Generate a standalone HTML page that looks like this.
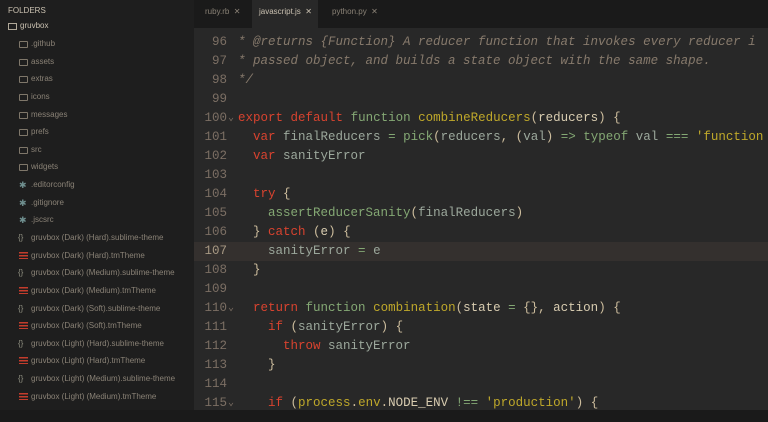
<!DOCTYPE html>
<html><head><meta charset="utf-8"><style>
*{margin:0;padding:0;box-sizing:border-box}
body{width:768px;height:422px;overflow:hidden;background:#282828;position:relative;font-family:"Liberation Sans",sans-serif}
#side{position:absolute;left:0;top:0;width:194px;height:422px;background:#1e1e1e;color:#a89984;font-size:8px}
.hdr{position:absolute;left:8px;top:6px;color:#c9c0b0;font-size:8px}
.it{position:absolute;left:31px;white-space:nowrap;color:#8a8276}
.ic{position:absolute;left:19px;width:9px;height:7px;border:1px solid #7f776a;border-radius:1px}
.ic2{position:absolute;left:19px;font-size:9px;color:#6f8f8f}
.ic3{position:absolute;left:18px;font-size:8px;color:#8f8f80}
.ic4{position:absolute;left:19px;width:9px;height:7px;background:repeating-linear-gradient(#c43c2c 0 1.5px,transparent 1.5px 3px)}
#tabs{position:absolute;left:194px;top:0;width:574px;height:28px;background:#1a1a1a}
.tab{position:absolute;top:0;height:28px;line-height:24px;font-size:8px;color:#8a8276}
#ed{position:absolute;left:194px;top:28px;width:574px;height:382px;background:#282828;overflow:hidden}
.ln{position:absolute;left:0;width:574px;height:19px;font-family:"Liberation Mono",monospace;font-size:12.5px;line-height:19px;white-space:pre}
.n{position:absolute;left:0;width:33px;text-align:right;color:#7c6f64}
.c{position:absolute;left:44px;color:#cdbd9d}
.f{position:absolute;left:34px;color:#7c6f64;font-size:10px}
.cm{color:#877a6c;font-style:italic}.r{color:#d8432f}.g{color:#84a874}.y{color:#bfa82a}.b{color:#9ca89c}.w{color:#d8ccb0}
#bot{position:absolute;left:0;top:410px;width:768px;height:12px;background:#1a1a1a}
</style></head><body>
<div id="side">
<div class="hdr">FOLDERS</div>
<div style="position:absolute;left:8px;top:23px;width:9px;height:7px;border:1px solid #b0a898"></div>
<div class="it" style="left:20px;top:21px;color:#c9c0b0">gruvbox</div>
<div class="ic" style="top:41px"></div><div class="it" style="top:39px">.github</div>
<div class="ic" style="top:59px"></div><div class="it" style="top:57px">assets</div>
<div class="ic" style="top:76px"></div><div class="it" style="top:74px">extras</div>
<div class="ic" style="top:94px"></div><div class="it" style="top:92px">icons</div>
<div class="ic" style="top:112px"></div><div class="it" style="top:110px">messages</div>
<div class="ic" style="top:129px"></div><div class="it" style="top:127px">prefs</div>
<div class="ic" style="top:147px"></div><div class="it" style="top:145px">src</div>
<div class="ic" style="top:164px"></div><div class="it" style="top:162px">widgets</div>
<div class="ic2" style="top:180px">✱</div><div class="it" style="top:180px">.editorconfig</div>
<div class="ic2" style="top:198px">✱</div><div class="it" style="top:198px">.gitignore</div>
<div class="ic2" style="top:215px">✱</div><div class="it" style="top:215px">.jscsrc</div>
<div class="ic3" style="top:233px">{}</div><div class="it" style="top:233px">gruvbox (Dark) (Hard).sublime-theme</div>
<div class="ic4" style="top:252px"></div><div class="it" style="top:251px">gruvbox (Dark) (Hard).tmTheme</div>
<div class="ic3" style="top:268px">{}</div><div class="it" style="top:268px">gruvbox (Dark) (Medium).sublime-theme</div>
<div class="ic4" style="top:287px"></div><div class="it" style="top:286px">gruvbox (Dark) (Medium).tmTheme</div>
<div class="ic3" style="top:304px">{}</div><div class="it" style="top:304px">gruvbox (Dark) (Soft).sublime-theme</div>
<div class="ic4" style="top:322px"></div><div class="it" style="top:321px">gruvbox (Dark) (Soft).tmTheme</div>
<div class="ic3" style="top:339px">{}</div><div class="it" style="top:339px">gruvbox (Light) (Hard).sublime-theme</div>
<div class="ic4" style="top:357px"></div><div class="it" style="top:356px">gruvbox (Light) (Hard).tmTheme</div>
<div class="ic3" style="top:374px">{}</div><div class="it" style="top:374px">gruvbox (Light) (Medium).sublime-theme</div>
<div class="ic4" style="top:393px"></div><div class="it" style="top:392px">gruvbox (Light) (Medium).tmTheme</div>
<div class="ic3" style="top:409px">{}</div><div class="it" style="top:409px">gruvbox (Light) (Soft).sublime-theme</div>
</div>
<div id="tabs">
<div class="tab" style="left:11px">ruby.rb &nbsp;✕</div>
<div class="tab" style="left:58px;width:66px;background:#282828;color:#c9c0b0;padding-left:7px">javascript.js &nbsp;✕</div>
<div class="tab" style="left:138px">python.py &nbsp;✕</div>
</div>
<div id="ed">
<div class="ln" style="top:5px"><span class="n">96</span><span class="c cm">* @returns {Function} A reducer function that invokes every reducer i</span></div>
<div class="ln" style="top:24px"><span class="n">97</span><span class="c cm">* passed object, and builds a state object with the same shape.</span></div>
<div class="ln" style="top:43px"><span class="n">98</span><span class="c cm">*/</span></div>
<div class="ln" style="top:62px"><span class="n">99</span></div>
<div class="ln" style="top:81px"><span class="n">100</span><span class="f">⌄</span><span class="c"><span class="r">export</span> <span class="r">default</span> <span class="g">function</span> <span class="y">combineReducers</span>(<span class="w">reducers</span>) {</span></div>
<div class="ln" style="top:100px"><span class="n">101</span><span class="c">  <span class="r">var</span> <span class="b">finalReducers</span> <span class="g">=</span> <span class="g">pick</span>(<span class="b">reducers</span>, (<span class="b">val</span>) <span class="g">=&gt;</span> <span class="g">typeof</span> <span class="b">val</span> <span class="g">===</span> <span class="y">'function</span></span></div>
<div class="ln" style="top:119px"><span class="n">102</span><span class="c">  <span class="r">var</span> <span class="b">sanityError</span></span></div>
<div class="ln" style="top:138px"><span class="n">103</span></div>
<div class="ln" style="top:157px"><span class="n">104</span><span class="c">  <span class="r">try</span> {</span></div>
<div class="ln" style="top:176px"><span class="n">105</span><span class="c">    <span class="g">assertReducerSanity</span>(<span class="b">finalReducers</span>)</span></div>
<div class="ln" style="top:195px"><span class="n">106</span><span class="c">  } <span class="r">catch</span> (<span class="w">e</span>) {</span></div>
<div class="ln" style="top:214px;background:#34302e"><span class="n" style="color:#a89984">107</span><span class="c">    <span class="b">sanityError</span> <span class="g">=</span> <span class="b">e</span></span></div>
<div class="ln" style="top:233px"><span class="n">108</span><span class="c">  }</span></div>
<div class="ln" style="top:252px"><span class="n">109</span></div>
<div class="ln" style="top:271px"><span class="n">110</span><span class="f">⌄</span><span class="c">  <span class="r">return</span> <span class="g">function</span> <span class="y">combination</span>(<span class="w">state</span> <span class="g">=</span> {}, <span class="w">action</span>) {</span></div>
<div class="ln" style="top:290px"><span class="n">111</span><span class="c">    <span class="r">if</span> (<span class="b">sanityError</span>) {</span></div>
<div class="ln" style="top:309px"><span class="n">112</span><span class="c">      <span class="r">throw</span> <span class="b">sanityError</span></span></div>
<div class="ln" style="top:328px"><span class="n">113</span><span class="c">    }</span></div>
<div class="ln" style="top:347px"><span class="n">114</span></div>
<div class="ln" style="top:366px"><span class="n">115</span><span class="f">⌄</span><span class="c">    <span class="r">if</span> (<span class="y">process</span>.<span class="y">env</span>.<span class="w">NODE_ENV</span> <span class="g">!==</span> <span class="y">'production'</span>) {</span></div>
</div>
<div id="bot"></div>
</body></html>
